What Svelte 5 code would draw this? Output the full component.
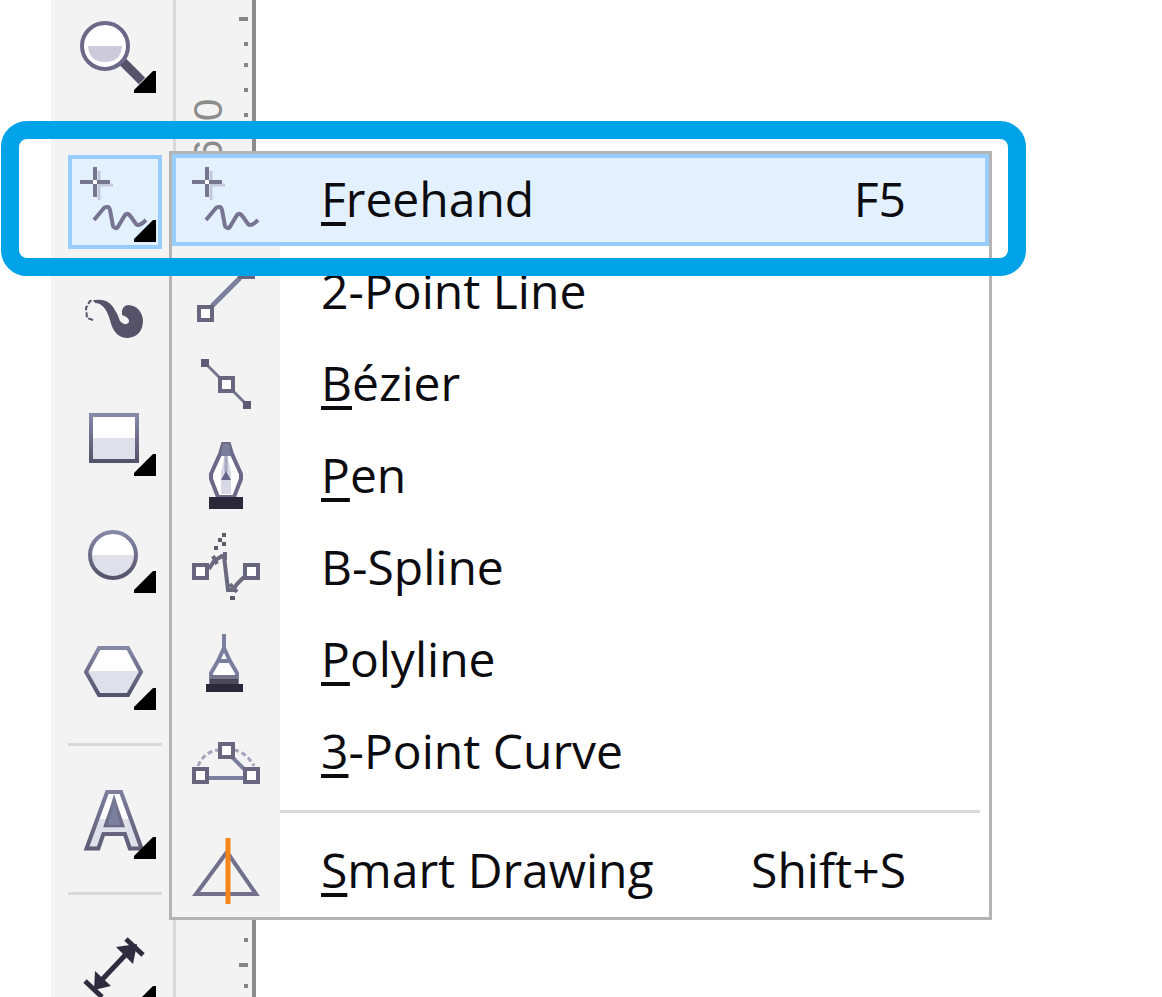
<script>
  let activeTool = $state("freehand");
  let selected = $state("Freehand");

  const tools = [
    { id: "zoom", label: "Zoom", flyout: true },
    { separator: true },
    { id: "freehand", label: "Curve", flyout: true },
    { id: "artistic", label: "Artistic Media" },
    { id: "rectangle", label: "Rectangle", flyout: true },
    { id: "ellipse", label: "Ellipse", flyout: true },
    { id: "polygon", label: "Polygon", flyout: true },
    { separator: true },
    { id: "text", label: "Text", flyout: true },
    { separator: true },
    { id: "dimension", label: "Dimension", flyout: true },
  ];

  const items = [
    { name: "Freehand", key: "F", rest: "reehand", shortcut: "F5" },
    { name: "2-Point Line", key: "", rest: "2-Point Line" },
    { name: "Bézier", key: "B", rest: "ézier" },
    { name: "Pen", key: "P", rest: "en" },
    { name: "B-Spline", key: "", rest: "B-Spline" },
    { name: "Polyline", key: "P", rest: "olyline" },
    { name: "3-Point Curve", key: "3", rest: "-Point Curve" },
    { separator: true },
    { name: "Smart Drawing", key: "S", rest: "mart Drawing", shortcut: "Shift+S" },
  ];
</script>

<!-- square curve node -->
{#snippet node(x, y)}
  <rect {x} {y} width="13" height="13" fill="#fff" stroke="#68657f" stroke-width="4" />
{/snippet}

{#snippet freehandIcon()}
  <path d="M31 16v14h14M31 31v14" fill="none" stroke="#c3c9dc" stroke-width="3" />
  <path d="M12 27h30M27 12v30" fill="none" stroke="#77758f" stroke-width="4" />
  <rect x="25" y="25" width="4" height="4" fill="#fff" />
  <path d="M26 65L36 53Q41 50 42 55L45 71Q48 76 51 70L57 60Q60 57 63 62L68 69Q71 72 78 65" fill="none" stroke="#767490" stroke-width="4" />
{/snippet}

<div class="page">
  <nav class="toolbar" aria-label="Toolbox">
    {#each tools as tool}
      {#if tool.separator}
        <hr />
      {:else}
        <button
          class="tool"
          class:active={activeTool === tool.id}
          aria-label={tool.label}
          onclick={() => (activeTool = tool.id)}
        >
          <svg viewBox="0 0 94 94" aria-hidden="true">
            <defs>
              <linearGradient id="edge" x1="0" y1="0" x2="0" y2="1">
                <stop offset="0" stop-color="#8588a6" />
                <stop offset="1" stop-color="#56536c" />
              </linearGradient>
              <linearGradient id="half" x1="0" y1="0" x2="0" y2="1">
                <stop offset="0.5" stop-color="#fff" />
                <stop offset="0.5" stop-color="#e0e0ea" />
              </linearGradient>
            </defs>
            {#if tool.id === "zoom"}
              <path d="M54 55L74 75" stroke="#55526a" stroke-width="9" />
              <circle cx="37" cy="40" r="23" fill="#fff" stroke="#6b6987" stroke-width="4" />
              <path d="M20 40h34q-1 16-17 16T20 40z" fill="#cccadb" />
            {:else if tool.id === "freehand"}
              {@render freehandIcon()}
            {:else if tool.id === "artistic"}
              <path d="M25 48l-6-2-1-10 4-7h9" fill="none" stroke="#55526a" stroke-width="2" stroke-dasharray="5 2" />
              <path d="M27 28Q39 26 45 35Q50 42 52 49Q57 55 61 50Q62 46 54 43Q53 34 60 33Q73 34 75 48Q75 64 60 66Q46 66 42 48Q37 31 27 31Z" fill="#55526a" />
            {:else if tool.id === "rectangle"}
              <rect x="23" y="26" width="46" height="46" fill="url(#half)" stroke="url(#edge)" stroke-width="4" />
            {:else if tool.id === "ellipse"}
              <circle cx="45" cy="49" r="23" fill="url(#half)" stroke="url(#edge)" stroke-width="4" />
            {:else if tool.id === "polygon"}
              <path d="M31 25h29l13 24-13 23H31L18 49z" fill="url(#half)" stroke="url(#edge)" stroke-width="4" />
            {:else if tool.id === "text"}
              <text x="46" y="76" class="letter" text-anchor="middle" fill="url(#half)" stroke="url(#edge)">A</text>
              <path d="M46 32l6 21H40z" fill="#7b7f9e" />
            {:else if tool.id === "dimension"}
              <path d="M29 64L63 28M58 18l17 16M17 60l17 16" stroke="#2f2c40" stroke-width="5" />
              <path d="M48 26l21-3-4 20zM27 50l-1 19 17-4z" fill="#2f2c40" />
            {/if}
            {#if tool.flyout}
              <path d="M66 87v-3L85 65h3v22z" fill="#000" />
            {/if}
          </svg>
        </button>
      {/if}
    {/each}
  </nav>

  <div class="ruler" aria-hidden="true">
    <svg viewBox="0 0 76 997">
      <g fill="#858585">
        <rect x="63" y="17" width="9" height="4" />
        <rect x="68" y="42" width="4" height="4" />
        <rect x="68" y="63" width="4" height="4" />
        <rect x="68" y="88" width="4" height="4" />
        <rect x="68" y="113" width="4" height="4" />
        <rect x="68" y="938" width="4" height="4" />
        <rect x="63" y="963" width="9" height="4" />
        <rect x="68" y="984" width="4" height="4" />
      </g>
      <text class="mark" transform="translate(46 121) rotate(-90)">0</text>
      <text class="mark" transform="translate(46 162) rotate(-90)">6</text>
    </svg>
  </div>

  <div class="menu" role="menu">
    {#each items as item}
      {#if item.separator}
        <div class="divider" role="separator"></div>
      {:else}
        <button
          class="item"
          class:selected={selected === item.name}
          role="menuitem"
          onclick={() => (selected = item.name)}
        >
          <svg viewBox="0 0 108 92" aria-hidden="true">
            {#if item.name === "Freehand"}
              <g transform="translate(8 1)">{@render freehandIcon()}</g>
            {:else if item.name === "2-Point Line"}
              <path d="M40 60L68 32" stroke="#7b7f9e" stroke-width="5" />
              {@render node(27, 61)}
              {@render node(68, 18)}
            {:else if item.name === "Bézier"}
              <path d="M33 25L75 67" stroke="#77758c" stroke-width="3" />
              <path d="M29 21h8v8h-8zM71 63h8v8h-8z" fill="#5d5a74" />
              {@render node(48, 40)}
            {:else if item.name === "Pen"}
              <path d="M51 14h6l3 10 9 20v5l-7 18H46l-7-18v-5l9-20z" fill="#fff" stroke="#6b6987" stroke-width="4" />
              <path d="M54 20l5 22v22H49V42z" fill="#d8d8e6" />
              <path d="M51 14h6l2 12H49z" fill="#7b7f9e" />
              <path d="M54 26v16" stroke="#a5a7c0" stroke-width="3" />
              <path d="M54 41l5 9H49z" fill="#68658a" />
              <rect x="37" y="67" width="34" height="12" fill="#2b2839" />
            {:else if item.name === "B-Spline"}
              <path d="M37 47l5-8 8-5h2l4 34h5l4-6 7-7M41 34l4 8M53 30v8M58 62l7 8" fill="none" stroke="#6b6980" stroke-width="4" />
              <path d="M42 24h4v4h-4zM46 16h4v4h-4zM50 11h4v4h-4zM50 20h4v4h-4zM58 74h5v4h-5z" fill="#5d5a6c" />
              {@render node(22, 43)}
              {@render node(73, 43)}
            {:else if item.name === "Polyline"}
              <path d="M52 34l6 13 7 12v11H39V59l7-12z" fill="#fff" stroke="#7b7f9e" stroke-width="4" />
              <path d="M52 20v19M46 47h12" stroke="#7b7f9e" stroke-width="4" />
              <path d="M38 61h28v5H38z" fill="#77758c" />
              <path d="M38 65h28v6H38z" fill="#4b485c" />
              <rect x="34" y="70" width="37" height="8" fill="#2b2839" />
            {:else if item.name === "3-Point Curve"}
              <path d="M26 60Q32 46 46 44M62 44Q74 46 82 60" fill="none" stroke="#a3a5bb" stroke-width="3" stroke-dasharray="5 3" />
              <path d="M60 51l14 14M36 72h36" stroke="#7b7f9e" stroke-width="4" />
              {@render node(48, 38)}
              {@render node(22, 63)}
              {@render node(73, 63)}
            {:else if item.name === "Smart Drawing"}
              <path d="M55 27L24 69h60z" fill="none" stroke="#72708c" stroke-width="4" />
              <path d="M56 13v66" stroke="#f5861a" stroke-width="5" />
            {/if}
          </svg>
          <span class="label">{#if item.key}<u>{item.key}</u>{/if}{item.rest}</span>
          {#if item.shortcut}
            <kbd>{item.shortcut}</kbd>
          {/if}
        </button>
      {/if}
    {/each}
  </div>

  <div class="highlight"></div>
</div>

<style>
  :global(body) {
    background: #fff;
  }

  .page {
    position: relative;
    display: flex;
    height: 100vh;
    overflow: hidden;
    padding-left: 51px;
    box-sizing: border-box;
    font-family: "Open Sans", "Noto Sans", sans-serif;
    color: #0c0c10;
  }

  .toolbar {
    display: flex;
    flex-direction: column;
    gap: 23px;
    padding: 6px 11px 0 17px;
    background: #f3f3f3;
    border-right: 3px solid #dadada;
  }

  .toolbar hr {
    width: 100%;
    height: 3px;
    margin: 3px 0;
    border: 0;
    flex: none;
    background: #d9d9d9;
  }

  .tool {
    flex: none;
    width: 94px;
    height: 94px;
    padding: 0;
    border: 0;
    background: none;
  }

  .tool.active {
    background: #e3f1ff;
    outline: 4px solid #99ccff;
    outline-offset: -4px;
  }

  svg {
    display: block;
  }

  .letter {
    font: bold 82px "Liberation Sans", sans-serif;
    stroke-width: 4px;
  }

  .ruler {
    width: 76px;
    background: #f3f3f3;
    border-right: 4px solid #8c8c8c;
  }

  .ruler svg {
    width: 76px;
  }

  .mark {
    font: 40px "Liberation Sans", sans-serif;
    fill: #8c8c8c;
  }

  .menu {
    position: absolute;
    top: 151px;
    left: 169px;
    right: 170px;
    border: 3px solid #b4b4b4;
    background: linear-gradient(to right, #f3f3f3 108px, #fff 108px);
  }

  .item {
    display: flex;
    align-items: center;
    width: 100%;
    height: 92px;
    padding: 0 83px 0 0;
    border: 0;
    background: none;
    color: inherit;
    font: inherit;
    font-size: 48px;
    text-align: left;
  }

  .item svg {
    flex: none;
    width: 108px;
    height: 92px;
  }

  .item.selected {
    background: #e3f1ff;
    outline: 4px solid #99ccff;
    outline-offset: -4px;
  }

  .label {
    flex: 1;
    padding-left: 41px;
    white-space: nowrap;
  }

  .label,
  kbd {
    padding-bottom: 4px;
  }

  .label u {
    text-decoration-thickness: 4px;
    text-underline-offset: 5px;
  }

  kbd {
    font: inherit;
  }

  .divider {
    height: 3px;
    margin: 12px 9px 12px 108px;
    background: #d9d9d9;
  }

  .highlight {
    position: absolute;
    top: 121px;
    left: 1px;
    right: 136px;
    height: 155px;
    box-sizing: border-box;
    border: 18px solid #00a2e8;
    border-radius: 26px;
    pointer-events: none;
  }
</style>
